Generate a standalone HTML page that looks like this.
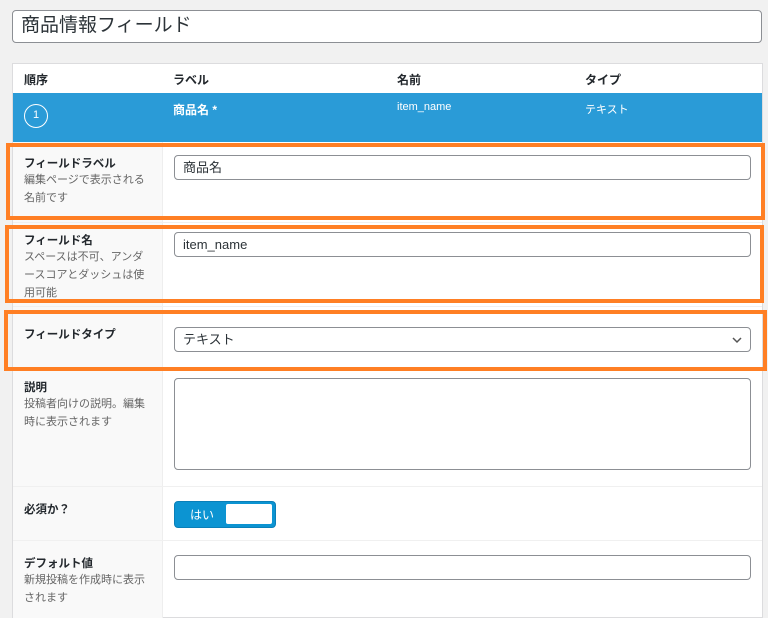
<!DOCTYPE html>
<html><head><meta charset="utf-8"><style>
*{box-sizing:border-box;margin:0;padding:0}
body{width:768px;height:618px;overflow:hidden;background:#f1f1f1;font-family:"Liberation Sans","Noto Sans CJK JP",sans-serif;position:relative;color:#23282d}
.a{position:absolute}
.inp{position:absolute;left:174px;width:577px;height:25px;border:1px solid #8c8f94;border-radius:4px;background:#fff;font-size:13px;padding:0 8px;line-height:23px;color:#2c3338}
.lbl{position:absolute;left:24px;font-size:11.5px;font-weight:bold;color:#23282d}
.desc{position:absolute;left:24px;font-size:11px;color:#666;line-height:18px;width:124px}
.row{position:absolute;left:13px;width:749px;border-top:1px solid #f0f0f0}
.ob{position:absolute;border:4px solid #ff7f24}
.hd{position:absolute;top:71px;font-size:12px;font-weight:bold}
.bl{position:absolute;top:101px;font-size:11px;color:#fff}
</style></head><body>
<div class="a" style="left:12px;top:10px;width:750px;height:33px;border:1px solid #8c8f94;border-radius:4px;background:#fff;font-size:19px;padding:0 8px;line-height:29px;color:#2c3338">商品情報フィールド</div>
<div class="a" style="left:12px;top:63px;width:751px;height:555px;background:#fff;border:1px solid #dcdcde"></div>
<div class="hd" style="left:24px">順序</div>
<div class="hd" style="left:173px">ラベル</div>
<div class="hd" style="left:397px">名前</div>
<div class="hd" style="left:585px">タイプ</div>
<div class="a" style="left:13px;top:93px;width:749px;height:49px;background:#2a9bd7"></div>
<div class="a" style="left:24px;top:104px;width:24px;height:24px;border:1.5px solid #fff;border-radius:50%;color:#fff;font-size:11px;text-align:center;line-height:21px">1</div>
<div class="bl" style="left:173px;font-weight:bold;font-size:12px">商品名 *</div>
<div class="bl" style="left:397px">item_name</div>
<div class="bl" style="left:585px">テキスト</div>
<div class="a" style="left:13px;top:142px;width:150px;height:476px;background:#f9f9f9;border-right:1px solid #eee"></div>
<div class="row" style="top:222px"></div><div class="row" style="top:306px"></div><div class="row" style="top:368px"></div><div class="row" style="top:486px"></div><div class="row" style="top:540px"></div>

<div class="lbl" style="top:155px">フィールドラベル</div>
<div class="desc" style="top:171px">編集ページで表示される名前です</div>
<div class="inp" style="top:155px">商品名</div>

<div class="lbl" style="top:232px">フィールド名</div>
<div class="desc" style="top:248px">スペースは不可、アンダースコアとダッシュは使用可能</div>
<div class="inp" style="top:232px">item_name</div>

<div class="lbl" style="top:326px">フィールドタイプ</div>
<div class="inp" style="top:327px">テキスト<svg class="a" style="right:8px;top:9px" width="10" height="7" viewBox="0 0 10 7"><path d="M1 1l4 4 4-4" fill="none" stroke="#555" stroke-width="1.5"/></svg></div>

<div class="lbl" style="top:379px">説明</div>
<div class="desc" style="top:395px">投稿者向けの説明。編集時に表示されます</div>
<div class="inp" style="top:378px;height:92px"></div>

<div class="lbl" style="top:501px">必須か？</div>
<div class="a" style="left:174px;top:501px;width:102px;height:27px;background:#0c94d2;border-radius:4px;border:1px solid #0a7fb8"></div>
<div class="a" style="left:190px;top:506px;color:#fff;font-size:12px">はい</div>
<div class="a" style="left:226px;top:504px;width:46px;height:20px;background:#fff;border-radius:2px"></div>

<div class="lbl" style="top:555px">デフォルト値</div>
<div class="desc" style="top:571px">新規投稿を作成時に表示されます</div>
<div class="inp" style="top:555px"></div>

<div class="ob" style="left:6px;top:143px;width:759px;height:77px"></div>
<div class="ob" style="left:5px;top:225px;width:759px;height:78px"></div>
<div class="ob" style="left:4px;top:310px;width:763px;height:61px"></div>
</body></html>
